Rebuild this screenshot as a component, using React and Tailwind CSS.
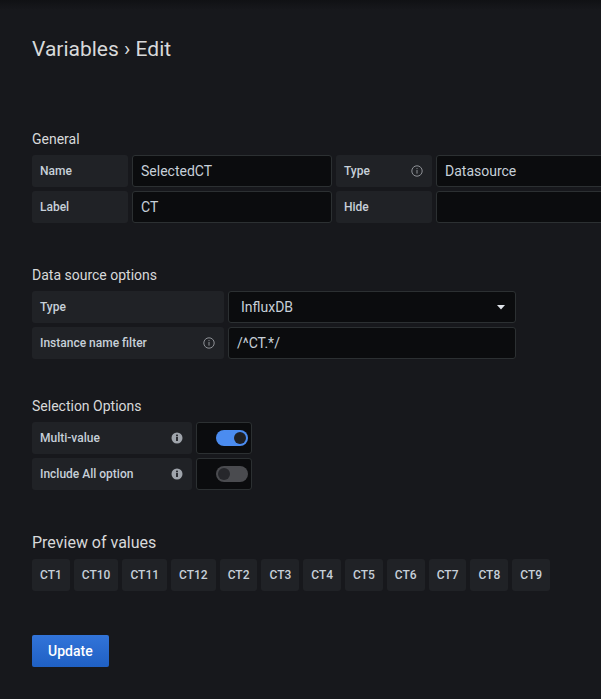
const font = { fontFamily: 'Roboto, "Liberation Sans", sans-serif' }

function InfoOutline() {
  return (
    <svg width="12" height="12" viewBox="0 0 12 12" fill="none">
      <circle cx="6" cy="6" r="5.2" stroke="#8e9196" strokeWidth="1" />
      <rect x="5.5" y="5" width="1" height="3.6" fill="#8e9196" />
      <rect x="5.5" y="3.1" width="1" height="1" fill="#8e9196" />
    </svg>
  )
}

function InfoFilled() {
  return (
    <svg width="12" height="12" viewBox="0 0 12 12">
      <circle cx="6" cy="6" r="5.5" fill="#9fa4ab" />
      <rect x="5.1" y="5" width="1.8" height="4" fill="#202226" />
      <rect x="5.1" y="2.6" width="1.8" height="1.7" fill="#202226" />
    </svg>
  )
}

function Label({ w, children, info }) {
  return (
    <div className={`${w} h-8 shrink-0 rounded-[3px] bg-[#202226] px-2 flex items-center justify-between text-[12px] font-medium text-[#c7d0d9]`}>
      <span>{children}</span>
      {info === 'outline' && <span className="mr-px flex"><InfoOutline /></span>}
      {info === 'filled' && <span className="mr-px flex"><InfoFilled /></span>}
    </div>
  )
}

function Input({ w, value, children }) {
  return (
    <div className={`${w} h-8 shrink-0 rounded-[3px] border border-[#2c3032] bg-[#0b0c0e] px-2 flex items-center text-[14px] text-[#c7d0d9]`}>
      <span className="flex-1">{value}</span>
      {children}
    </div>
  )
}

function Heading({ children, className = '' }) {
  return <div className={`leading-[20px] text-[#d8d9da] mb-[6px] ${className}`}>{children}</div>
}

function Toggle({ on }) {
  return (
    <div className="w-[56px] h-8 shrink-0 rounded-[3px] border border-[#2c3032] bg-[#0b0c0e] flex items-center justify-end pr-[3px]">
      <div className={`w-8 h-4 rounded-full flex items-center px-[2px] ${on ? 'bg-[#4b8cf0] justify-end' : 'bg-[#4a4b4f] justify-start'}`}>
        <div className={`w-[12px] h-[12px] rounded-full ${on ? 'bg-[#1f2024]' : 'bg-[#26272b]'}`} />
      </div>
    </div>
  )
}

const values = ['CT1', 'CT10', 'CT11', 'CT12', 'CT2', 'CT3', 'CT4', 'CT5', 'CT6', 'CT7', 'CT8', 'CT9']

export default function App() {
  return (
    <div className="min-h-screen w-[601px] overflow-hidden bg-[#17181c]" style={font}>
      <div className="h-[10px] bg-gradient-to-b from-[#101114] to-[#17181c]" />
      <div className="px-8 pb-10">
        <div className="mt-[27px] text-[21px] leading-[25px] text-[#d8d9da]">Variables › Edit</div>

        <Heading className="mt-[67px] text-[14px]">General</Heading>
        <div className="flex flex-col gap-1">
          <div className="flex gap-1">
            <Label w="w-[96px]">Name</Label>
            <Input w="w-[200px]" value="SelectedCT" />
            <Label w="w-[96px]" info="outline">Type</Label>
            <Input w="w-[200px]" value="Datasource" />
          </div>
          <div className="flex gap-1">
            <Label w="w-[96px]">Label</Label>
            <Input w="w-[200px]" value="CT" />
            <Label w="w-[96px]">Hide</Label>
            <Input w="w-[200px]" value="" />
          </div>
        </div>

        <Heading className="mt-[42px] text-[14px]">Data source options</Heading>
        <div className="flex flex-col gap-1">
          <div className="flex gap-1">
            <Label w="w-[192px]">Type</Label>
            <Input w="w-[288px]" value={<span className="pl-1">InfluxDB</span>}>
              <svg width="8" height="5" viewBox="0 0 8 5" className="mr-[2px]">
                <path d="M0 0 H8 L4 4.5 Z" fill="#e0e4ea" />
              </svg>
            </Input>
          </div>
          <div className="flex gap-1">
            <Label w="w-[192px]" info="outline">Instance name filter</Label>
            <Input w="w-[288px]" value="/^CT.*/" />
          </div>
        </div>

        <Heading className="mt-[37px] text-[14px]">Selection Options</Heading>
        <div className="flex flex-col gap-1">
          <div className="flex gap-1">
            <Label w="w-[160px]" info="filled">Multi-value</Label>
            <Toggle on />
          </div>
          <div className="flex gap-1">
            <Label w="w-[160px]" info="filled">Include All option</Label>
            <Toggle />
          </div>
        </div>

        <Heading className="mt-[43px] text-[16px]">Preview of values</Heading>
        <div className="flex gap-1">
          {values.map(v => (
            <div key={v} className="h-8 rounded-[3px] bg-[#202226] px-2 flex items-center text-[12px] font-medium text-[#c7d0d9]">
              {v}
            </div>
          ))}
        </div>

        <button className="mt-[44px] h-8 px-4 rounded-[2px] bg-gradient-to-b from-[#3274d9] to-[#1f60c4] text-[14px] font-medium text-white flex items-center">
          Update
        </button>
      </div>
    </div>
  )
}
